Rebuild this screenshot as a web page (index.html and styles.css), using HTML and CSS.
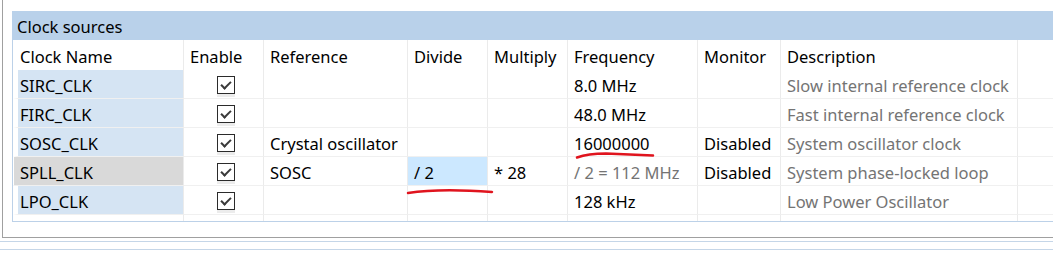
FILE: index.html
```html
<!DOCTYPE html>
<html lang="en">
<head>
    <meta charset="UTF-8">
    <title>Clock sources</title>
    <link rel="stylesheet" href="styles.css">
</head>
<body>
    <div class="frame">
        <div class="panel">
            <div class="panel-title">Clock sources</div>
            <table class="clocks">
                <tr class="head">
                    <th class="c-name">Clock Name</th>
                    <th class="c-enable">Enable</th>
                    <th class="c-ref">Reference</th>
                    <th class="c-div">Divide</th>
                    <th class="c-mul">Multiply</th>
                    <th class="c-freq">Frequency</th>
                    <th class="c-mon">Monitor</th>
                    <th class="c-desc">Description</th>
                    <th class="c-rest"></th>
                </tr>
                <tr>
                    <td class="name">SIRC_CLK</td>
                    <td class="enable"><span class="check"></span></td>
                    <td></td>
                    <td></td>
                    <td></td>
                    <td>8.0 MHz</td>
                    <td></td>
                    <td class="desc">Slow internal reference clock</td>
                    <td class="rest"></td>
                </tr>
                <tr>
                    <td class="name">FIRC_CLK</td>
                    <td class="enable"><span class="check"></span></td>
                    <td></td>
                    <td></td>
                    <td></td>
                    <td>48.0 MHz</td>
                    <td></td>
                    <td class="desc">Fast internal reference clock</td>
                    <td class="rest"></td>
                </tr>
                <tr>
                    <td class="name">SOSC_CLK</td>
                    <td class="enable"><span class="check"></span></td>
                    <td>Crystal oscillator</td>
                    <td></td>
                    <td></td>
                    <td>16000000</td>
                    <td>Disabled</td>
                    <td class="desc">System oscillator clock</td>
                    <td class="rest"></td>
                </tr>
                <tr class="selected">
                    <td class="name">SPLL_CLK</td>
                    <td class="enable"><span class="check"></span></td>
                    <td>SOSC</td>
                    <td class="editing">/ 2</td>
                    <td>* 28</td>
                    <td class="derived">/ 2 = 112 MHz</td>
                    <td>Disabled</td>
                    <td class="desc">System phase-locked loop</td>
                    <td class="rest"></td>
                </tr>
                <tr>
                    <td class="name">LPO_CLK</td>
                    <td class="enable"><span class="check"></span></td>
                    <td></td>
                    <td></td>
                    <td></td>
                    <td>128 kHz</td>
                    <td></td>
                    <td class="desc">Low Power Oscillator</td>
                    <td class="rest"></td>
                </tr>
                <tr class="filler">
                    <td></td><td></td><td></td><td></td><td></td><td></td><td></td><td></td><td class="rest"></td>
                </tr>
            </table>
        </div>
    </div>
    <div class="tabs"></div>

    <!-- red pen marks drawn over the table -->
    <svg class="marks" width="1053" height="256" viewBox="0 0 1053 256">
        <path d="M577 157.5 Q588 153.5 606 153.5 L653 155.5" />
        <path d="M408 193 Q440 188 492 192" />
    </svg>
</body>
</html>
```

FILE: styles.css
```css
body {
    margin: 0;
    font-family: 'Noto Sans', sans-serif;
    font-size: 16.5px;
    color: #000;
    background-color: #fff;
    overflow: hidden;
}
.frame {
    margin-left: 2px;
    border-left: 1px solid #a0a0a0;
    border-bottom: 1px solid #a0a0a0;
    padding: 11px 0 15px 9px;
}
.panel-title {
    box-sizing: border-box;
    height: 29px;
    line-height: 29px;
    padding: 1px 0 0 5px;
    background-color: #b9d1ea; /* title bar blue */
}
.clocks {
    width: 100%;
    table-layout: fixed;
    border-collapse: separate;
    border-spacing: 0;
    border-left: 1px solid #bcd1e8;
    border-bottom: 1px solid #bcd1e8;
}
.clocks th,
.clocks td {
    box-sizing: border-box;
    padding: 3px 0 0 6px;
    border-right: 1px solid #ebebeb;
    white-space: nowrap;
    overflow: hidden;
    text-align: left;
    font-weight: normal;
}
.clocks th {
    height: 30px;
}
.clocks td {
    height: 29px;
    border-bottom: 1px solid #f0f0f0;
}
.c-name { width: 171px; padding-left: 7px !important; }
.c-enable { width: 80px; }
.c-ref { width: 144px; }
.c-div { width: 80px; }
.c-mul { width: 80px; }
.c-freq { width: 130px; }
.c-mon { width: 83px; }
.c-desc { width: 237px; }
.clocks .c-rest,
.clocks .rest {
    border-right: none;
}
.clocks td.name {
    border-left: 5px solid #fff;
    padding-left: 2px;
    background-color: #d5e4f3; /* light blue name cells */
}
.clocks .selected td.name {
    border-left-width: 1px;
    padding-left: 6px;
    background-color: #d9d9d9; /* selected row */
}
.clocks td.editing {
    background-color: #cce8ff;
}
.clocks td.derived,
.clocks td.desc {
    color: #747474;
}
.clocks td.enable {
    text-align: center;
    padding: 0 0 0 4px;
}
.check {
    display: inline-block;
    position: relative;
    width: 18px;
    height: 18px;
    box-sizing: border-box;
    border: 1.5px solid #2b2b2b;
    background-color: #fff;
    box-shadow: 0 3px 0 #ececec;
    vertical-align: middle;
    margin-top: -2px;
}
.check::after {
    content: "";
    position: absolute;
    left: 5px;
    top: 2px;
    width: 4px;
    height: 8px;
    border-right: 2px solid #3a3a3a;
    border-bottom: 2px solid #3a3a3a;
    transform: rotate(45deg);
}
.clocks .filler td {
    height: 6px;
    padding: 0;
    border-bottom: none;
}
.tabs {
    margin-top: 3px;
    height: 7px;
    border-top: 1px solid #c5d6e8;
    border-bottom: 1px solid #c5d6e8;
}
.marks {
    position: absolute;
    left: 0;
    top: 0;
    pointer-events: none;
}
.marks path {
    fill: none;
    stroke: #e0141e;
    stroke-width: 2.5;
    stroke-linecap: round;
}
```
